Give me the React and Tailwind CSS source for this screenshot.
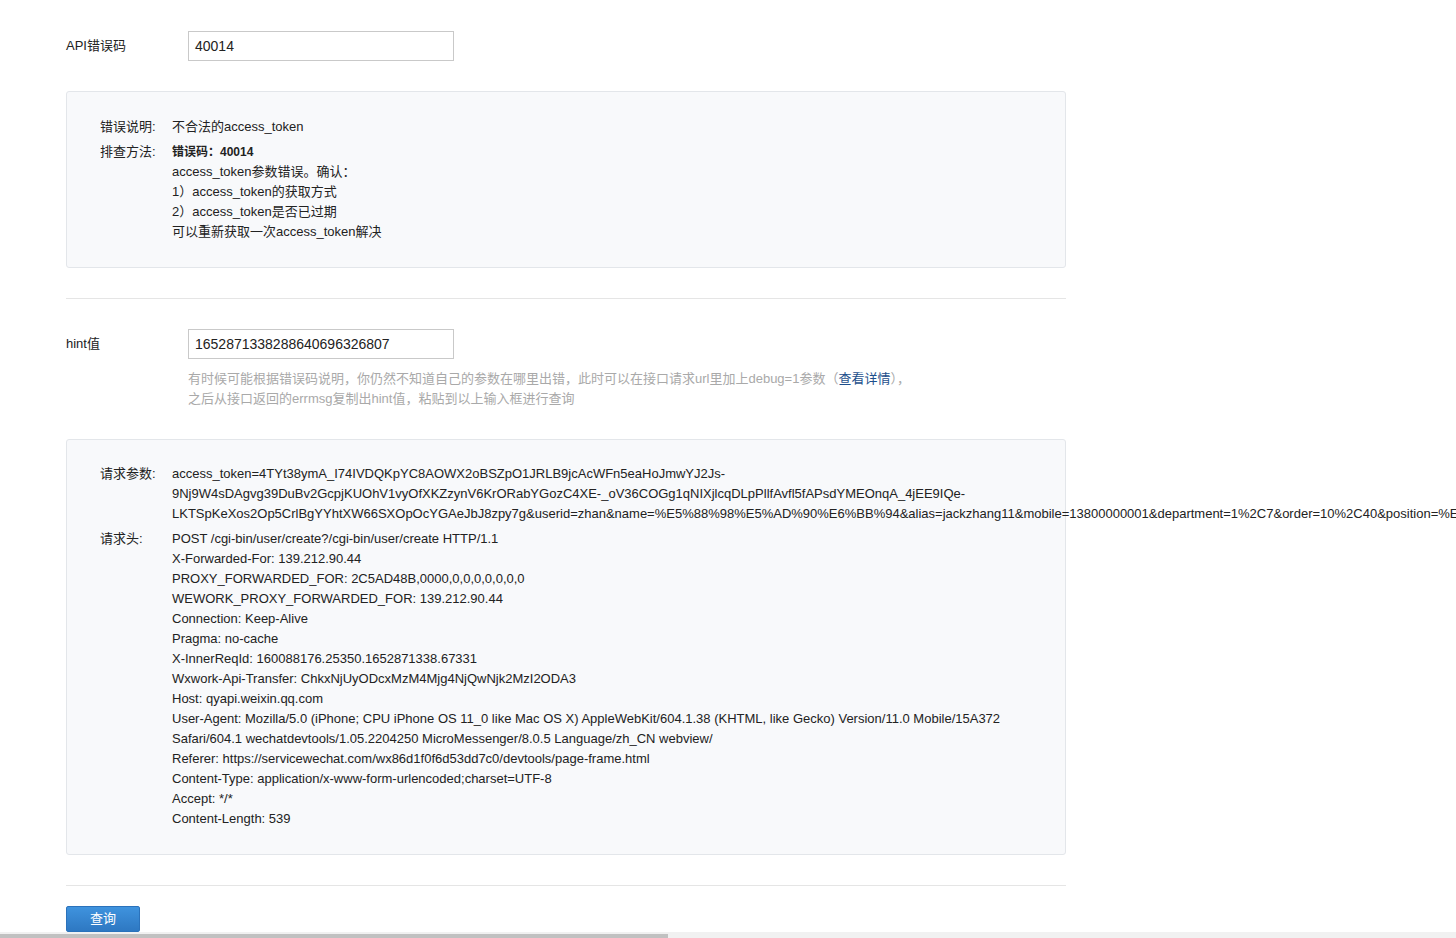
import React from "react";

const font = { fontFamily: '"Liberation Sans", Arial, "Noto Sans CJK SC", sans-serif' };

function Row({ label, children }) {
  return (
    <div className="flex">
      <div className="w-[72px] shrink-0 leading-[20px]">{label}</div>
      <div className="min-w-0 flex-1 leading-[20px]">{children}</div>
    </div>
  );
}

const params =
  "access_token=4TYt38ymA_I74IVDQKpYC8AOWX2oBSZpO1JRLB9jcAcWFn5eaHoJmwYJ2Js-9Nj9W4sDAgvg39DuBv2GcpjKUOhV1vyOfXKZzynV6KrORabYGozC4XE-_oV36COGg1qNIXjlcqDLpPllfAvfl5fAPsdYMEOnqA_4jEE9IQe-LKTSpKeXos2Op5CrlBgYYhtXW66SXOpOcYGAeJbJ8zpy7g&userid=zhan&name=%E5%88%98%E5%AD%90%E6%BB%94&alias=jackzhang11&mobile=13800000001&department=1%2C7&order=10%2C40&position=%E4%BA%A7%E5%93%81%E7%BB%8F%E7%90%86&gender=1&email=zhangsan%40gzdev.com&is_leader_in_dept=1%2C0&enable=1";

const headers = [
  "POST /cgi-bin/user/create?/cgi-bin/user/create HTTP/1.1",
  "X-Forwarded-For: 139.212.90.44",
  "PROXY_FORWARDED_FOR: 2C5AD48B,0000,0,0,0,0,0,0,0",
  "WEWORK_PROXY_FORWARDED_FOR: 139.212.90.44",
  "Connection: Keep-Alive",
  "Pragma: no-cache",
  "X-InnerReqId: 160088176.25350.1652871338.67331",
  "Wxwork-Api-Transfer: ChkxNjUyODcxMzM4Mjg4NjQwNjk2MzI2ODA3",
  "Host: qyapi.weixin.qq.com",
  "User-Agent: Mozilla/5.0 (iPhone; CPU iPhone OS 11_0 like Mac OS X) AppleWebKit/604.1.38 (KHTML, like Gecko) Version/11.0 Mobile/15A372",
  "Safari/604.1 wechatdevtools/1.05.2204250 MicroMessenger/8.0.5 Language/zh_CN webview/",
  "Referer: https://servicewechat.com/wx86d1f0f6d53dd7c0/devtools/page-frame.html",
  "Content-Type: application/x-www-form-urlencoded;charset=UTF-8",
  "Accept: */*",
  "Content-Length: 539",
];

export default function App() {
  return (
    <div className="relative h-[938px] w-full overflow-hidden bg-white text-[13px] text-[#222]" style={font}>
      <div className="w-[1000px] ml-[66px] pt-[31px]">
        <div className="flex items-center">
          <div className="w-[122px] shrink-0">API错误码</div>
          <div className="h-[30px] w-[266px] border border-[#c9c9c9] px-[6px] text-[14px] leading-[28px]">40014</div>
        </div>

        <div className="mt-[30px] rounded-[3px] border border-[#e3e6ea] bg-[#f8f9fb] pl-[33px] pr-[30px] pt-[25px] pb-[25px]">
          <div className="flex flex-col gap-[5px]">
            <Row label="错误说明:">不合法的access_token</Row>
            <Row label="排查方法:">
              <div className="font-bold text-[12px]">错误码：40014</div>
              <div>access_token参数错误。确认：</div>
              <div>1）access_token的获取方式</div>
              <div>2）access_token是否已过期</div>
              <div>可以重新获取一次access_token解决</div>
            </Row>
          </div>
        </div>

        <div className="mt-[30px] h-px bg-[#e5e5e5]" />

        <div className="mt-[30px] flex items-center">
          <div className="w-[122px] shrink-0">hint值</div>
          <div className="h-[30px] w-[266px] border border-[#c9c9c9] px-[6px] text-[14px] leading-[28px]">1652871338288640696326807</div>
        </div>
        <div className="ml-[122px] mt-[10px] leading-[20px] text-[#a9a9a9] whitespace-nowrap">
          <div>
            有时候可能根据错误码说明，你仍然不知道自己的参数在哪里出错，此时可以在接口请求url里加上debug=1参数（
            <span className="text-[#1d4f8c]">查看详情</span>
            ），
          </div>
          <div>之后从接口返回的errmsg复制出hint值，粘贴到以上输入框进行查询</div>
        </div>

        <div className="mt-[30px] rounded-[3px] border border-[#e3e6ea] bg-[#f8f9fb] pl-[33px] pr-[30px] pt-[24px] pb-[25px]">
          <div className="flex flex-col gap-[5px]">
            <Row label="请求参数:">
              <div className="whitespace-normal">{params}</div>
            </Row>
            <Row label="请求头:">
              {headers.map((h) => (
                <div key={h} className="whitespace-nowrap">{h}</div>
              ))}
            </Row>
          </div>
        </div>

        <div className="mt-[30px] h-px bg-[#e5e5e5]" />

        <button className="mt-[20px] h-[26px] w-[74px] rounded-[2px] border border-[#2b72bb] bg-gradient-to-b from-[#3f93de] to-[#2e78c2] text-[13px] text-white">
          查询
        </button>
      </div>

      <div className="absolute bottom-0 left-0 h-[6px] w-full bg-[#f1f1f1]">
        <div className="mt-[2px] h-[4px] w-[668px] bg-[#c1c1c1]" />
      </div>
    </div>
  );
}
